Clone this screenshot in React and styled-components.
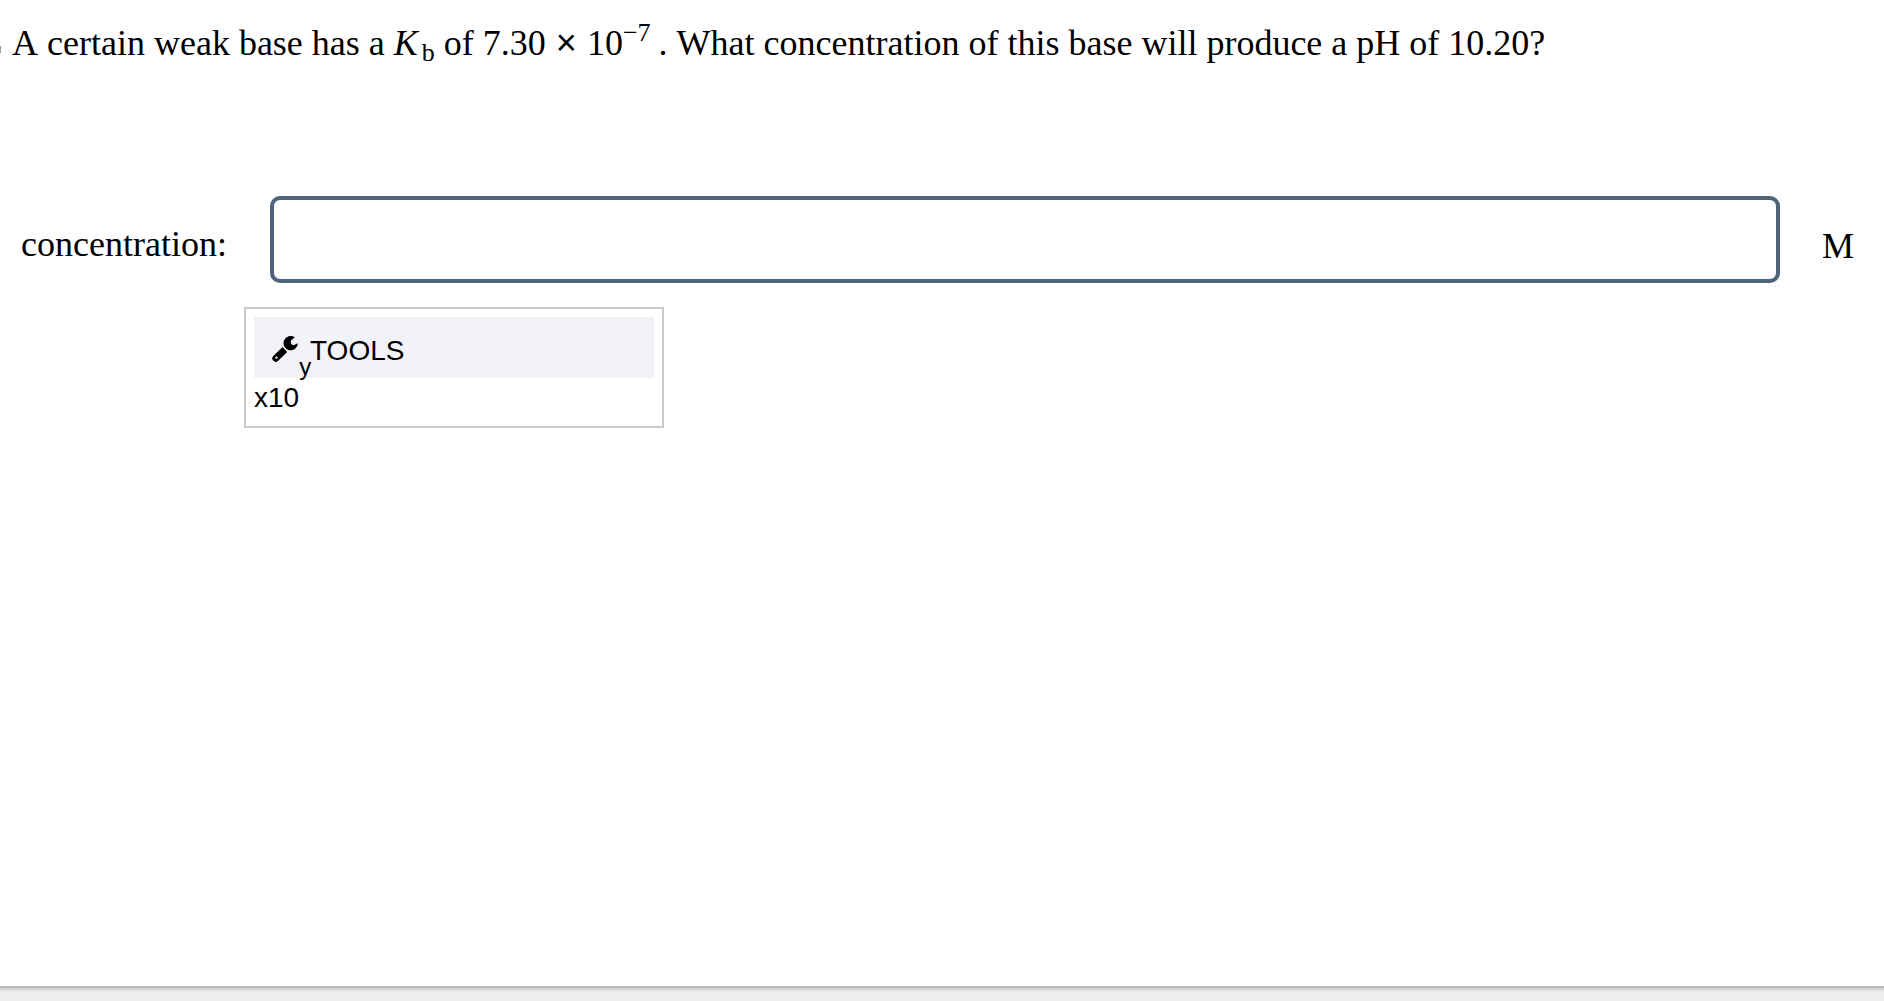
import React from 'react'
import styled, { createGlobalStyle } from 'styled-components'

const App = () => {
    return (
        <Page>
            <GlobalStyle />
            <Content>
                <Question>
                    A certain weak base has a <i>K</i><Sub>b</Sub> of 7.30<Times>×</Times>10<Sup>−7</Sup><Stop>.</Stop> What concentration of this base will produce a pH of 10.20?
                </Question>
                <Answer>
                    <Label htmlFor='concentration'>concentration:</Label>
                    <Field id='concentration' type='text' autoComplete='off' />
                    <Unit>M</Unit>
                </Answer>
                <Tools>
                    <ToolsButton type='button'>
                        <Wrench viewBox='0 0 26 26' aria-hidden='true'>
                            <path d='M22.8 1.2L19 4.6Q17.9 8.6 21.4 9.2L25.9 7.2A7.2 7.2 0 1 1 22.8 1.2Z' />
                            <path d='M10.6 10.9L15.2 15.9L5.9 24.9A3.4 3.4 0 0 1 1.3 19.9ZM5.7 21.6A1.2 1.2 0 1 0 3.3 21.6A1.2 1.2 0 1 0 5.7 21.6Z' fillRule='evenodd' />
                            <path d='M11.2 10.2L16 15.4' stroke='#f2f3f8' strokeWidth='0.6' />
                        </Wrench>
                        TOOLS
                    </ToolsButton>
                    <PowerButton type='button'>x10<Exponent>y</Exponent></PowerButton>
                </Tools>
            </Content>
            <Footer />
        </Page>
    )
}

export default App

const GlobalStyle = createGlobalStyle`
    *{
        box-sizing:border-box;
    }

    body{
        margin:0;
        background:#fff;
        color:#000;
        font-family:"Liberation Serif", "Times New Roman", serif;
        font-size:36px;
    }
`

const Page = styled.div`
    display:flex;
    flex-direction:column;
    min-height:100vh;
    overflow:hidden;
`

const Content = styled.main`
    flex:1;
`

const Question = styled.p`
    position:relative;
    margin:0;
    padding:22px 12px 0;
    line-height:42px;
    font-kerning:none;

    &::before{
        content:'';
        position:absolute;
        left:0;
        top:46px;
        width:1px;
        height:7px;
        background:#999;
    }
`

const Sub = styled.sub`
    margin-left:4px;
    font-size:26px;
    line-height:0;
    vertical-align:-6px;
`

const Sup = styled.sup`
    font-size:26px;
    line-height:0;
    vertical-align:14px;
`

const Times = styled.span`
    margin:0 10px;
    font-family:"Liberation Sans", Arial, sans-serif;
`

const Stop = styled.span`
    margin-left:8px;
`

const Answer = styled.div`
    display:flex;
    align-items:center;
    margin-top:132px;
    padding:0 30px 0 21px;
`

const Label = styled.label`
    width:249px;
    padding-top:8px;
`

const Field = styled.input`
    flex:1;
    min-width:0;
    height:87px;
    padding:0 16px;
    border:4px solid #4f637b;
    border-radius:10px;
    background:#fff;
    font:inherit;
    outline:none;
`

const Unit = styled.span`
    margin-left:42px;
    padding-top:12px;
`

const Tools = styled.div`
    width:420px;
    margin:24px 0 0 244px;
    padding:8px;
    border:2px solid #cacaca;
`

const ToolsButton = styled.button`
    display:flex;
    align-items:center;
    gap:12px;
    width:100%;
    height:61px;
    padding:6px 18px 0;
    border:none;
    background:#f2f3f8;
    color:#000;
    font:28px "Liberation Sans", Arial, sans-serif;
    cursor:pointer;
`

const Wrench = styled.svg`
    width:26px;
    height:26px;
    margin-bottom:4px;
    fill:#000;
`

const PowerButton = styled.button`
    display:block;
    position:relative;
    height:40px;
    padding:0;
    border:none;
    background:none;
    color:#000;
    font:28px/40px "Liberation Sans", Arial, sans-serif;
    cursor:pointer;
`

/* sits over the lower edge of the tools button */
const Exponent = styled.sup`
    position:absolute;
    left:100%;
    top:-23px;
    font-size:24px;
    line-height:24px;
`

const Footer = styled.footer`
    height:15px;
    background:linear-gradient(#b0b0b0, #d4d4d4 3px, #ededed 6px);
`
